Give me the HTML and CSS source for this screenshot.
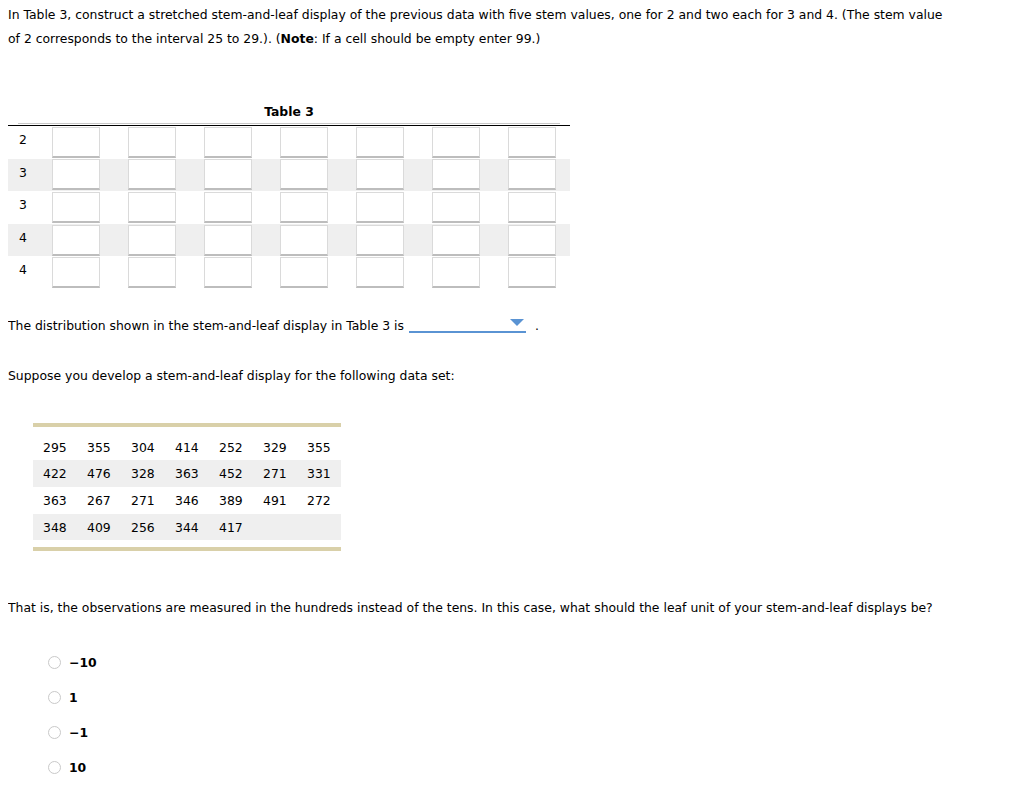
FILE: index.html
```html
<!DOCTYPE html>
<html>
<head>
<meta charset="utf-8">
<link rel="stylesheet" href="styles.css">
</head>
<body>
<p class="intro">In Table 3, construct a stretched stem-and-leaf display of the previous data with five stem values, one for 2 and two each for 3 and 4. (The stem value of 2 corresponds to the interval 25 to 29.). (<b>Note</b>: If a cell should be empty enter 99.)</p>

<div class="stem-wrap">
  <div class="caption">Table 3</div>
  <table class="stem">
    <tr><td class="sv">2</td><td><span class="box"></span></td><td><span class="box"></span></td><td><span class="box"></span></td><td><span class="box"></span></td><td><span class="box"></span></td><td><span class="box"></span></td><td><span class="box"></span></td></tr>
    <tr class="alt"><td class="sv">3</td><td><span class="box"></span></td><td><span class="box"></span></td><td><span class="box"></span></td><td><span class="box"></span></td><td><span class="box"></span></td><td><span class="box"></span></td><td><span class="box"></span></td></tr>
    <tr><td class="sv">3</td><td><span class="box"></span></td><td><span class="box"></span></td><td><span class="box"></span></td><td><span class="box"></span></td><td><span class="box"></span></td><td><span class="box"></span></td><td><span class="box"></span></td></tr>
    <tr class="alt"><td class="sv">4</td><td><span class="box"></span></td><td><span class="box"></span></td><td><span class="box"></span></td><td><span class="box"></span></td><td><span class="box"></span></td><td><span class="box"></span></td><td><span class="box"></span></td></tr>
    <tr><td class="sv">4</td><td><span class="box"></span></td><td><span class="box"></span></td><td><span class="box"></span></td><td><span class="box"></span></td><td><span class="box"></span></td><td><span class="box"></span></td><td><span class="box"></span></td></tr>
  </table>
</div>

<p class="dist">The distribution shown in the stem-and-leaf display in Table 3 is <span class="select"><svg class="arrow" width="14" height="7" viewBox="0 0 14 7"><polygon points="0,0 14,0 7,7" fill="#5a93d3"/></svg></span><span class="dot">.</span></p>

<p class="suppose">Suppose you develop a stem-and-leaf display for the following data set:</p>

<div class="data">
  <div class="drow"><span>295</span><span>355</span><span>304</span><span>414</span><span>252</span><span>329</span><span>355</span></div>
  <div class="drow alt"><span>422</span><span>476</span><span>328</span><span>363</span><span>452</span><span>271</span><span>331</span></div>
  <div class="drow"><span>363</span><span>267</span><span>271</span><span>346</span><span>389</span><span>491</span><span>272</span></div>
  <div class="drow alt"><span>348</span><span>409</span><span>256</span><span>344</span><span>417</span><span></span><span></span></div>
</div>

<p class="question">That is, the observations are measured in the hundreds instead of the tens. In this case, what should the leaf unit of your stem-and-leaf displays be?</p>

<ul class="options">
  <li><span class="radio"></span><b>&minus;10</b></li>
  <li><span class="radio"></span><b>1</b></li>
  <li><span class="radio"></span><b>&minus;1</b></li>
  <li><span class="radio"></span><b>10</b></li>
</ul>
</body>
</html>
```

FILE: styles.css
```css
html, body {
  background: #ffffff;
}
body {
  margin: 0 8px;
  font-family: "DejaVu Sans", Verdana, sans-serif;
  font-size: 12.4px;
  color: #000;
}
p {
  margin: 0;
}
.intro {
  padding-top: 3px;
  line-height: 24px;
  width: 950px;
}
.stem-wrap {
  margin-top: 52px;
  width: 562px;
}
.caption {
  font-weight: bold;
  text-align: center;
  line-height: 18px;
  padding-bottom: 2px;
  margin: 0 10px;
  border-bottom: 1px solid #c8c8c8;
}
.stem {
  border-collapse: collapse;
  border-top: 1px solid #000;
  margin-top: 1px;
  width: 562px;
}
.stem td {
  padding: 0;
  height: 32.6px;
  width: 76px;
  text-align: center;
  vertical-align: middle;
}
.stem td.sv {
  width: 30px;
  vertical-align: top;
  padding-top: 5px;
  line-height: 18px;
  box-sizing: border-box;
}
.stem tr.alt td {
  background: #efefef;
}
.box {
  display: block;
  margin: 0 auto;
  width: 48px;
  height: 31px;
  box-sizing: border-box;
  background: #fff;
  border: 1px solid #dadada;
  border-bottom: 2px solid #bdbdbd;
}
.dist {
  margin-top: 28px;
  line-height: 18px;
}
.select {
  display: inline-block;
  position: relative;
  width: 117px;
  height: 14px;
  border-bottom: 2px solid #5a93d3;
  vertical-align: -3px;
  margin-left: 1px;
}
.arrow {
  position: absolute;
  right: 2px;
  bottom: 5px;
}
.dot {
  margin-left: 9px;
}
.suppose {
  margin-top: 32px;
  line-height: 18px;
}
.data {
  margin: 38px 0 0 25px;
  width: 308px;
  border-top: 4px solid #d9d0a9;
  border-bottom: 4px solid #d9d0a9;
  padding: 6.7px 0;
}
.drow {
  display: flex;
  height: 26.7px;
  align-items: center;
}
.drow span {
  width: 44px;
  padding-left: 10px;
  box-sizing: border-box;
}
.drow.alt {
  background: #efefef;
}
.question {
  margin-top: 48px;
  line-height: 18px;
}
.options {
  list-style: none;
  margin: 28px 0 0 0;
  padding: 0 0 0 40px;
}
.options li {
  display: flex;
  align-items: center;
  height: 35px;
}
.options li b {
  font-weight: bold;
}
.radio {
  width: 13px;
  height: 13px;
  border: 1px solid #c9c9c9;
  border-radius: 50%;
  margin-right: 8px;
  box-sizing: border-box;
  background: #fff;
}
```
